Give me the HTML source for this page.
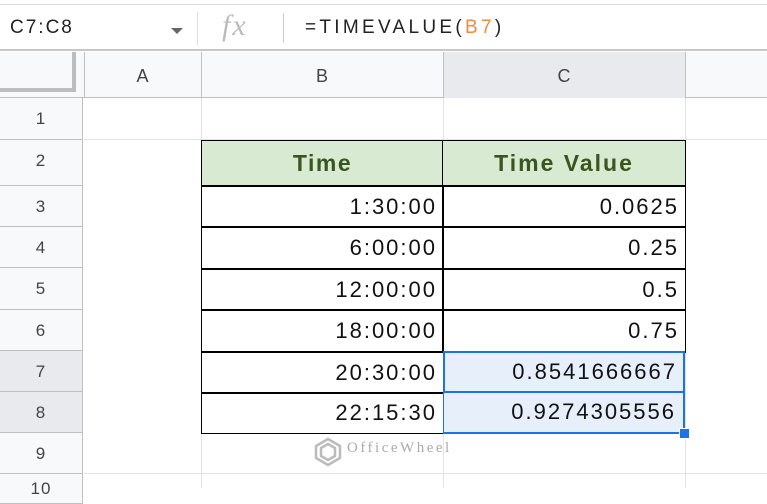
<!DOCTYPE html><html><head><style>
*{margin:0;padding:0;box-sizing:border-box}
body{width:767px;height:488px;overflow:hidden;background:#fff;font-family:"Liberation Sans",Arial,sans-serif;position:relative}
.a{position:absolute}
.rn{position:absolute;left:0;width:83px;text-align:center;font-size:17px;color:#444;background:#f8f9fa;border-bottom:1px solid #c0c0c0;border-right:1px solid #c0c0c0;letter-spacing:1px}
.hl{background:#e8eaed}
.gv{position:absolute;top:98px;height:390px;width:1px;background:#e2e3e3}
.gh{position:absolute;left:84px;width:683px;height:1px;background:#e2e3e3}
.c{position:absolute;font-size:22px;color:#111;text-align:right;padding-right:6px;border:1.5px solid #000;display:flex;align-items:center;justify-content:flex-end;letter-spacing:2px}
</style></head><body>
<div class="a" style="left:0;top:0;width:767px;height:5px;background:#fff;border-bottom:1px solid #ddd"></div>
<div class="a" style="left:0;top:5px;width:767px;height:46px;background:#fff;border-bottom:2px solid #c7c7c7"></div>
<div class="a" style="left:10px;top:17px;font-size:19px;color:#222;letter-spacing:2px">C7:C8</div>
<div class="a" style="left:171px;top:28px;width:0;height:0;border-left:6px solid transparent;border-right:6px solid transparent;border-top:6px solid #666"></div>
<div class="a" style="left:197px;top:12px;width:1px;height:33px;background:#ddd"></div>
<div class="a" style="left:222px;top:9px;font-size:30px;font-style:italic;color:#bbb;font-family:'Liberation Serif',serif;letter-spacing:2px">fx</div>
<div class="a" style="left:283px;top:13px;width:1px;height:30px;background:#ccc"></div>
<div class="a" style="left:305px;top:17px;font-size:19px;color:#222;letter-spacing:3.3px">=TIMEVALUE(<span style="color:#f08a3c">B7</span>)</div>
<!-- column headers -->
<div class="a" style="left:0;top:52px;width:767px;height:46px;background:#f8f9fa;border-bottom:1px solid #c0c0c0"></div>
<div class="a" style="left:0;top:52px;width:76px;height:40px;border-right:4px solid #bdbdbd;border-bottom:4px solid #bdbdbd"></div>
<div class="a" style="left:443px;top:52px;width:242px;height:46px;background:#e8eaed"></div>
<div class="a" style="left:84px;top:52px;width:1px;height:46px;background:#c0c0c0"></div>
<div class="a" style="left:201px;top:52px;width:1px;height:46px;background:#c0c0c0"></div>
<div class="a" style="left:443px;top:52px;width:1px;height:46px;background:#c0c0c0"></div>
<div class="a" style="left:685px;top:52px;width:1px;height:46px;background:#c0c0c0"></div>
<div class="a" style="left:84px;top:66px;width:117px;text-align:center;font-size:18px;color:#444">A</div>
<div class="a" style="left:201px;top:66px;width:242px;text-align:center;font-size:18px;color:#444">B</div>
<div class="a" style="left:443px;top:66px;width:242px;text-align:center;font-size:18px;color:#444">C</div>
<!-- row headers -->
<div class="rn" style="top:98px;height:42px;line-height:42px">1</div>
<div class="rn" style="top:140px;height:46px;line-height:42px">2</div>
<div class="rn" style="top:186px;height:41px;line-height:41px">3</div>
<div class="rn" style="top:227px;height:41px;line-height:41px">4</div>
<div class="rn" style="top:268px;height:42px;line-height:41px">5</div>
<div class="rn" style="top:310px;height:41px;line-height:41px">6</div>
<div class="rn hl" style="top:351px;height:41px;line-height:41px">7</div>
<div class="rn hl" style="top:392px;height:41px;line-height:41px">8</div>
<div class="rn" style="top:433px;height:41px;line-height:41px">9</div>
<div class="rn" style="top:474px;height:30px;line-height:30px">10</div>
<!-- grid -->
<div class="gv" style="left:201px"></div><div class="gv" style="left:443px"></div><div class="gv" style="left:685px"></div>
<div class="gh" style="top:139px"></div><div class="gh" style="top:473px"></div>
<!-- table -->
<div class="c" style="left:201px;top:140px;width:243px;height:47px;background:#d9ead3;justify-content:center;padding:0;font-weight:bold;color:#38561d;font-size:23px;letter-spacing:1.5px">Time</div>
<div class="c" style="left:442px;top:140px;width:244px;height:47px;background:#d9ead3;justify-content:center;padding:0;font-weight:bold;color:#38561d;font-size:23px;letter-spacing:2px">Time Value</div>
<div class="c" style="left:201px;top:185px;width:243px;height:43px">1:30:00</div>
<div class="c" style="left:442px;top:185px;width:244px;height:43px">0.0625</div>
<div class="c" style="left:201px;top:226px;width:243px;height:44px">6:00:00</div>
<div class="c" style="left:442px;top:226px;width:244px;height:44px">0.25</div>
<div class="c" style="left:201px;top:268px;width:243px;height:43px">12:00:00</div>
<div class="c" style="left:442px;top:268px;width:244px;height:43px">0.5</div>
<div class="c" style="left:201px;top:309px;width:243px;height:44px">18:00:00</div>
<div class="c" style="left:442px;top:309px;width:244px;height:44px">0.75</div>
<div class="c" style="left:201px;top:351px;width:243px;height:43px">20:30:00</div>
<div class="c" style="left:201px;top:392px;width:243px;height:42px">22:15:30</div>
<div class="c" style="left:443px;top:351px;width:242px;height:83px;border:none;background:#e6effa"></div>
<div class="c" style="left:443px;top:351px;width:242px;height:42px;border:2px solid #1a73e8;background:transparent">0.8541666667</div>
<div class="c" style="left:443px;top:392px;width:242px;height:42px;border:none;border-left:1px solid #1a73e8;border-right:2px solid #1a73e8;border-bottom:2px solid #1a73e8;background:transparent;padding-right:7px">0.9274305556</div>
<div class="a" style="left:679px;top:428px;width:11px;height:11px;background:#1a73e8;border:1px solid #fff"></div>
<!-- watermark -->
<svg class="a" style="left:312px;top:436px" width="32" height="32" viewBox="0 0 32 32"><path d="M16 3 L28 10 V22 L16 29 L4 22 V10 Z M16 8 L23 12 V20 L16 24 L9 20 V12 Z" fill="none" stroke="#bbb" stroke-width="2.5"/></svg>
<div class="a" style="left:347px;top:440px;font-size:15px;color:#aaa;letter-spacing:2.5px;font-family:'Liberation Serif',serif">OfficeWheel</div>
</body></html>
